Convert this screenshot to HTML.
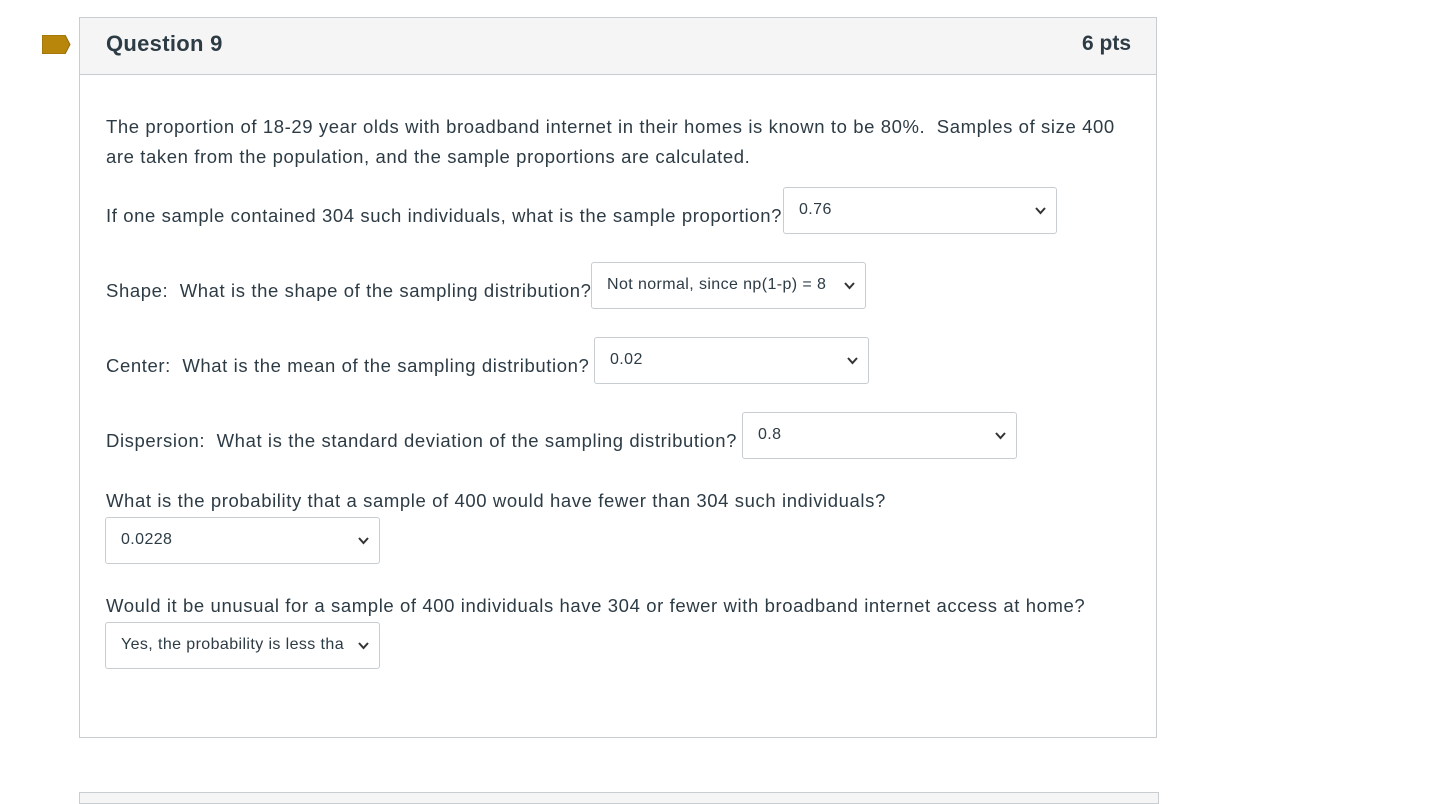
<!DOCTYPE html>
<html><head><style>
body{margin:0;width:1445px;height:798px;background:#fff;font-family:"Liberation Sans",sans-serif;color:#2d3b45;position:relative;overflow:hidden}
.a{position:absolute}
.box{left:79px;top:17px;width:1076px;height:719px;border:1px solid #c7cdd1}
.hdr{left:80px;top:18px;width:1076px;height:56px;background:#f5f5f5;border-bottom:1px solid #c7cdd1}
.t{font-size:18.5px;white-space:nowrap;line-height:24px;letter-spacing:0.6px}
.s{border:1px solid #c7cdd1;border-radius:3px;height:47px;box-sizing:border-box;font-size:16px;line-height:44px;padding-left:15px;background:#fff;white-space:nowrap;overflow:hidden;letter-spacing:0.4px}
.s svg{position:absolute;right:10px;top:19px}
</style></head><body>
<div class="a box"></div>
<div class="a hdr"></div>
<svg class="a" style="left:42px;top:35px" width="29" height="19"><path d="M0 0H23L28 9.5L23 19H0Z" fill="#b8860b" stroke="#8f6c0a"/></svg>
<div class="a" style="left:106px;top:31px;font-size:22px;font-weight:bold;color:#2d3b45;letter-spacing:0.3px">Question 9</div>
<div class="a" style="left:1082px;top:32px;font-size:21px;font-weight:bold">6 pts</div>
<div class="a t" style="left:106px;top:115px">The proportion of 18-29 year olds with broadband internet in their homes is known to be 80%.&nbsp; Samples of size 400</div>
<div class="a t" style="left:106px;top:145px">are taken from the population, and the sample proportions are calculated.</div>
<div class="a t" style="left:106px;top:204px">If one sample contained 304 such individuals, what is the sample proportion?</div>
<div class="a t" style="left:106px;top:279px">Shape:&nbsp; What is the shape of the sampling distribution?</div>
<div class="a t" style="left:106px;top:354px">Center:&nbsp; What is the mean of the sampling distribution?</div>
<div class="a t" style="left:106px;top:429px">Dispersion:&nbsp; What is the standard deviation of the sampling distribution?</div>
<div class="a t" style="left:106px;top:489px">What is the probability that a sample of 400 would have fewer than 304 such individuals?</div>
<div class="a t" style="left:106px;top:594px">Would it be unusual for a sample of 400 individuals have 304 or fewer with broadband internet access at home?</div>
<div class="a s" style="left:783px;top:187px;width:274px">0.76<svg width="11" height="8"><path d="M1 1L5.5 6L10 1" fill="none" stroke="#333" stroke-width="2"/></svg></div>
<div class="a s" style="left:591px;top:262px;width:275px">Not normal, since np(1-p) = 8<svg width="11" height="8"><path d="M1 1L5.5 6L10 1" fill="none" stroke="#333" stroke-width="2"/></svg></div>
<div class="a s" style="left:594px;top:337px;width:275px">0.02<svg width="11" height="8"><path d="M1 1L5.5 6L10 1" fill="none" stroke="#333" stroke-width="2"/></svg></div>
<div class="a s" style="left:742px;top:412px;width:275px">0.8<svg width="11" height="8"><path d="M1 1L5.5 6L10 1" fill="none" stroke="#333" stroke-width="2"/></svg></div>
<div class="a s" style="left:105px;top:517px;width:275px">0.0228<svg width="11" height="8"><path d="M1 1L5.5 6L10 1" fill="none" stroke="#333" stroke-width="2"/></svg></div>
<div class="a s" style="left:105px;top:622px;width:275px">Yes, the probability is less tha<svg width="11" height="8"><path d="M1 1L5.5 6L10 1" fill="none" stroke="#333" stroke-width="2"/></svg></div>
<div class="a" style="left:79px;top:792px;width:1078px;height:10px;border:1px solid #c7cdd1;background:#f5f5f5"></div>
</body></html>
